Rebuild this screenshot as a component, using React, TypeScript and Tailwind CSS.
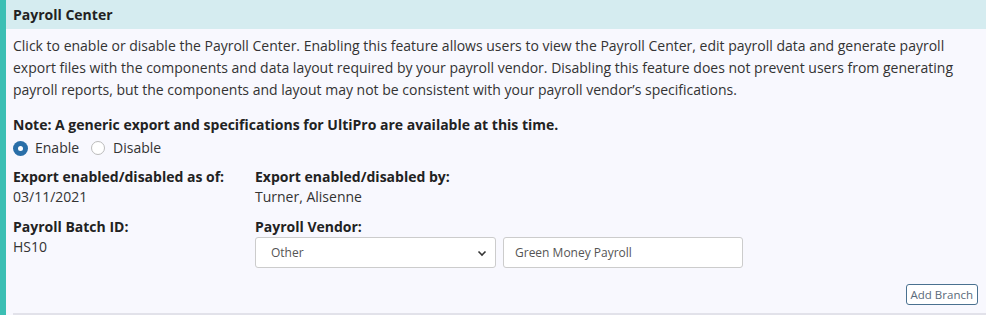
import React from "react";

export default function App() {
  return (
    <div className="w-[986px] h-[315px] bg-white" style={{ fontFamily: '"Open Sans", "Liberation Sans", sans-serif' }}>
      <div className="flex h-[315px]">
        <div className="w-[6px] bg-[#3cbfb4] shrink-0" />
        <div className="flex-1 flex flex-col bg-[#f8f8fe]">
          <div className="h-[29px] bg-[#d5ecf0] flex items-center pl-[7px]">
            <span className="text-[14px] font-bold text-[#222]">Payroll Center</span>
          </div>
          <div className="pl-[7px] pr-[8px] text-[14px] text-[#333] leading-[22px]">
            <p className="mt-[6px]">
              Click to enable or disable the Payroll Center. Enabling this feature allows users to view the Payroll Center, edit payroll data and generate payroll export files with the components and data layout required by your payroll vendor. Disabling this feature does not prevent users from generating payroll reports, but the components and layout may not be consistent with your payroll vendor’s specifications.
            </p>
            <p className="mt-[13px] font-bold text-[#222]">Note: A generic export and specifications for UltiPro are available at this time.</p>
            <div className="flex items-center h-[24px]">
              <label className="flex items-center mr-[12px]">
                <span className="w-[15px] h-[15px] rounded-full bg-[#2a6fa8] flex items-center justify-center mr-[7px]">
                  <span className="w-[5px] h-[5px] rounded-full bg-white" />
                </span>
                Enable
              </label>
              <label className="flex items-center">
                <span className="w-[14px] h-[14px] rounded-full border border-[#bbb] bg-white mr-[8px]" />
                Disable
              </label>
            </div>
            <div className="flex mt-[6px]">
              <div className="w-[242px]">
                <div className="font-bold text-[#222]">Export enabled/disabled as of:</div>
                <div className="mt-[-2px]">03/11/2021</div>
              </div>
              <div>
                <div className="font-bold text-[#222]">Export enabled/disabled by:</div>
                <div className="mt-[-2px]">Turner, Alisenne</div>
              </div>
            </div>
            <div className="flex mt-[8px]">
              <div className="w-[242px]">
                <div className="font-bold text-[#222]">Payroll Batch ID:</div>
                <div className="mt-[-2px]">HS10</div>
              </div>
              <div>
                <div className="font-bold text-[#222]">Payroll Vendor:</div>
                <div className="flex gap-[7px] mt-[-1px]">
                  <div className="w-[241px] h-[31px] border border-[#ccc] rounded-[3px] bg-white flex items-center justify-between pl-[15px] pr-[7px] text-[12px] text-[#555]">
                    <span>Other</span>
                    <svg width="12" height="12" viewBox="0 0 12 12" fill="none">
                      <path d="M2.5 4.5 L6 8 L9.5 4.5" stroke="#333" strokeWidth="1.6" />
                    </svg>
                  </div>
                  <div className="w-[240px] h-[31px] border border-[#ccc] rounded-[3px] bg-white flex items-center pl-[11px] text-[12px] text-[#555]">
                    Green Money Payroll
                  </div>
                </div>
              </div>
            </div>
            <div className="flex justify-end mt-[16px]">
              <button className="h-[21px] px-[4px] border border-[#4a7190] rounded-[3px] bg-white text-[11.5px] text-[#5a6a7a] leading-[18px]">
                Add Branch
              </button>
            </div>
          </div>
          <div className="mt-auto ml-[7px] h-[2px] bg-[#e2e2ea]" />
        </div>
      </div>
    </div>
  );
}
